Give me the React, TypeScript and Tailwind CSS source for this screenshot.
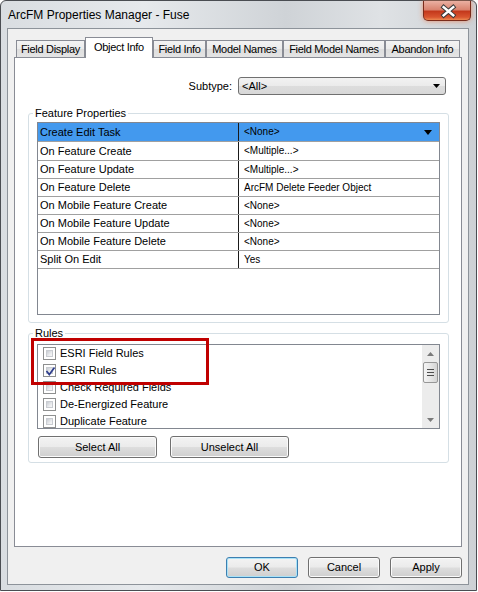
import React from "react";

const tabs = [
  { label: "Field Display", cls: "w-[69px]" },
  { label: "Object Info", cls: "w-[68px]", active: true },
  { label: "Field Info", cls: "w-[53px]" },
  { label: "Model Names", cls: "w-[77px]" },
  { label: "Field Model Names", cls: "w-[102px]" },
  { label: "Abandon Info", cls: "w-[75px]" },
];

const rows = [
  { k: "Create Edit Task", v: "<None>", sel: true, h: "h-[19px]" },
  { k: "On Feature Create", v: "<Multiple...>", h: "h-[19px]" },
  { k: "On Feature Update", v: "<Multiple...>", h: "h-[18px]" },
  { k: "On Feature Delete", v: "ArcFM Delete Feeder Object", h: "h-[18px]" },
  { k: "On Mobile Feature Create", v: "<None>", h: "h-[18px]" },
  { k: "On Mobile Feature Update", v: "<None>", h: "h-[18px]" },
  { k: "On Mobile Feature Delete", v: "<None>", h: "h-[18px]" },
  { k: "Split On Edit", v: "Yes", h: "h-[18px]" },
];

const rules = [
  { t: "ESRI Field Rules" },
  { t: "ESRI Rules", c: true },
  { t: "Check Required Fields" },
  { t: "De-Energized Feature" },
  { t: "Duplicate Feature" },
];

function Check({ checked }: { checked?: boolean }) {
  return (
    <span className="relative flex w-[13px] h-[13px] shrink-0 border border-[#8e8f8f] bg-white p-[2px]">
      <span className="flex-1 border border-[#c9ccd1] bg-[linear-gradient(135deg,#c8ccd2,#eeeff1_70%,#f7f7f7)]" />
      {checked && (
        <svg className="absolute left-0 top-0" width="13" height="13" viewBox="0 0 13 13">
          <path d="M2.5 6 L5.3 9.6 L10.5 2.5" fill="none" stroke="#2e3d8c" strokeWidth="1.7" />
        </svg>
      )}
    </span>
  );
}

function Btn({ children, cls, def }: { children: React.ReactNode; cls: string; def?: boolean }) {
  return (
    <div
      className={
        "flex items-center justify-center rounded-[3px] border text-[11px] leading-none text-black bg-[linear-gradient(#f3f3f3,#ebebeb_48%,#dddddd_52%,#cfcfcf)] " +
        cls +
        (def
          ? " border-[#3c7fb1] shadow-[inset_0_0_0_1px_#a9e2f7]"
          : " border-[#707070] shadow-[inset_0_0_0_1px_#fbfbfb]")
      }
    >
      {children}
    </div>
  );
}

export default function App() {
  return (
    <div className="relative w-[478px] h-[592px] bg-white font-['Liberation_Sans',Arial,sans-serif] text-black">
      <div className="flex flex-col w-[477px] h-[591px] rounded-t-[6px] border border-[#4a4d52] bg-[linear-gradient(90deg,#d9dde1,#e6e9ec_30%,#cfd3d7_60%,#dfe2e5_80%,#cdd1d5)]">
        {/* Title bar */}
        <div className="flex h-[27px] shrink-0 items-start justify-between">
          <div className="pl-[7px] pt-[7px] text-[12px] leading-[15px]">ArcFM Properties Manager - Fuse</div>
          <div className="mr-[5px] flex h-[20px] w-[48px] items-center justify-center rounded-b-[5px] border border-t-0 border-[#7a2c1b] bg-[linear-gradient(#eab0a2,#d98470_45%,#c4391c_55%,#d9552f_85%,#ec8a52)] shadow-[0_0_5px_rgba(240,110,60,0.7)]">
            <svg width="48" height="20" viewBox="0 0 48 20">
              <path d="M20.5 6 L30.5 14.5 M30.5 6 L20.5 14.5" stroke="#3a3a3a" strokeWidth="4.6" strokeLinecap="square" />
              <path d="M20.5 6 L30.5 14.5 M30.5 6 L20.5 14.5" stroke="#ffffff" strokeWidth="2.6" strokeLinecap="square" />
            </svg>
          </div>
        </div>

        {/* Client area */}
        <div className="ml-[6px] mr-[7px] mb-[5px] flex flex-1 flex-col border border-[#8d939a] bg-[#f0f0f0] px-[6px] pt-[8px]">
          {/* Tabs */}
          <div className="flex h-[20px] items-start pl-[2px]">
            {tabs.map((t) =>
              t.active ? (
                <div
                  key={t.label}
                  className={
                    "relative z-10 flex h-[21px] justify-center border border-b-0 border-[#898c95] bg-white pt-[2px] text-[11px] leading-[14px] tracking-[-0.3px] " +
                    t.cls
                  }
                >
                  {t.label}
                </div>
              ) : (
                <div
                  key={t.label}
                  className={
                    "mt-[3px] flex h-[17px] items-center justify-center border border-b-0 border-[#898c95] bg-[linear-gradient(#f3f3f3,#ebebeb_50%,#dedede_51%,#e4e4e4)] text-[11px] leading-[14px] tracking-[-0.3px] " +
                    t.cls
                  }
                >
                  {t.label}
                </div>
              )
            )}
          </div>

          {/* Tab page */}
          <div className="flex h-[490px] flex-col border border-[#898c95] bg-white">
            {/* Subtype */}
            <div className="mt-[19px] mr-[15px] flex items-center justify-end gap-[6px]">
              <span className="text-[11px] leading-[14px]">Subtype:</span>
              <div className="flex h-[18px] w-[208px] items-center justify-between rounded-[3px] border border-[#707070] bg-[linear-gradient(#f2f2f2,#ebebeb_50%,#dddddd_51%,#d8d8d8)] pl-[3px] pr-[5px]">
                <span className="text-[11px] leading-none">&lt;All&gt;</span>
                <svg width="7" height="4" viewBox="0 0 7 4">
                  <path d="M0 0 H7 L3.5 4 Z" fill="#000" />
                </svg>
              </div>
            </div>

            {/* Feature Properties */}
            <fieldset className="mt-[11px] ml-[13px] mr-[12px] min-w-0 rounded-[3px] border border-[#d5dfe5]">
              <legend className="ml-[4px] px-[2px] text-[11px] leading-[14px]">Feature Properties</legend>
              <div className="px-[8px] pt-[2px] pb-[7px]">
                <div className="flex h-[193px] flex-col border border-[#828790] bg-white">
                  {rows.map((r) => (
                    <div key={r.k} className={"flex shrink-0 border-b border-[#a0a0a0] " + r.h}>
                      <div
                        className={
                          "flex w-[201px] items-center border-r border-[#1a1a1a] pl-[2px] text-[11px] leading-none " +
                          (r.sel ? "bg-[#4399ee]" : "")
                        }
                      >
                        {r.k}
                      </div>
                      <div
                        className={
                          "flex flex-1 items-center justify-between pl-[5px] pr-[7px] text-[10px] leading-none " +
                          (r.sel ? "bg-[#4399ee]" : "")
                        }
                      >
                        <span>{r.v}</span>
                        {r.sel && (
                          <svg width="8" height="5" viewBox="0 0 8 5">
                            <path d="M0 0 H8 L4 5 Z" fill="#000" />
                          </svg>
                        )}
                      </div>
                    </div>
                  ))}
                </div>
              </div>
            </fieldset>

            {/* Rules */}
            <fieldset className="mt-[3px] ml-[13px] mr-[12px] min-w-0 rounded-[3px] border border-[#d5dfe5]">
              <legend className="ml-[4px] px-[2px] text-[11px] leading-[14px]">Rules</legend>
              <div className="px-[8px] pt-[4px] pb-[4px]">
                <div className="flex h-[85px] border border-[#828790] bg-white">
                  <div className="flex flex-1 flex-col overflow-hidden">
                    {rules.map((r) => (
                      <div key={r.t} className="flex h-[17px] shrink-0 items-center gap-[4px] pl-[5px]">
                        <Check checked={r.c} />
                        <span className="text-[11px] leading-none">{r.t}</span>
                      </div>
                    ))}
                  </div>
                  <div className="flex w-[17px] flex-col bg-[#ececec]">
                    <div className="flex h-[17px] items-center justify-center">
                      <svg width="7" height="4" viewBox="0 0 7 4">
                        <path d="M3.5 0 L7 4 H0 Z" fill="#7a7a7a" />
                      </svg>
                    </div>
                    <div className="mx-[1px] flex h-[21px] flex-col items-center justify-center gap-[2px] rounded-[2px] border border-[#979797] bg-[linear-gradient(90deg,#f4f4f4,#e6e6e6_50%,#d4d4d4)]">
                      <span className="h-[1px] w-[7px] bg-[#4d4d4d]" />
                      <span className="h-[1px] w-[7px] bg-[#4d4d4d]" />
                      <span className="h-[1px] w-[7px] bg-[#4d4d4d]" />
                    </div>
                    <div className="flex-1" />
                    <div className="flex h-[17px] items-center justify-center">
                      <svg width="7" height="4" viewBox="0 0 7 4">
                        <path d="M0 0 H7 L3.5 4 Z" fill="#7a7a7a" />
                      </svg>
                    </div>
                  </div>
                </div>
                <div className="mt-[7px] ml-[1px] flex gap-[13px]">
                  <Btn cls="w-[119px] h-[22px]">Select All</Btn>
                  <Btn cls="w-[119px] h-[22px]">Unselect All</Btn>
                </div>
              </div>
            </fieldset>
          </div>

          {/* Dialog buttons */}
          <div className="mt-[10px] flex justify-end gap-[10px]">
            <Btn cls="w-[72px] h-[21px]" def>OK</Btn>
            <Btn cls="w-[72px] h-[21px]">Cancel</Btn>
            <Btn cls="w-[72px] h-[21px]">Apply</Btn>
          </div>
        </div>
      </div>

      {/* Red annotation rectangle */}
      <div className="absolute left-[31px] top-[338px] h-[47px] w-[178px] border-[3px] border-[#c00000]" />
    </div>
  );
}
